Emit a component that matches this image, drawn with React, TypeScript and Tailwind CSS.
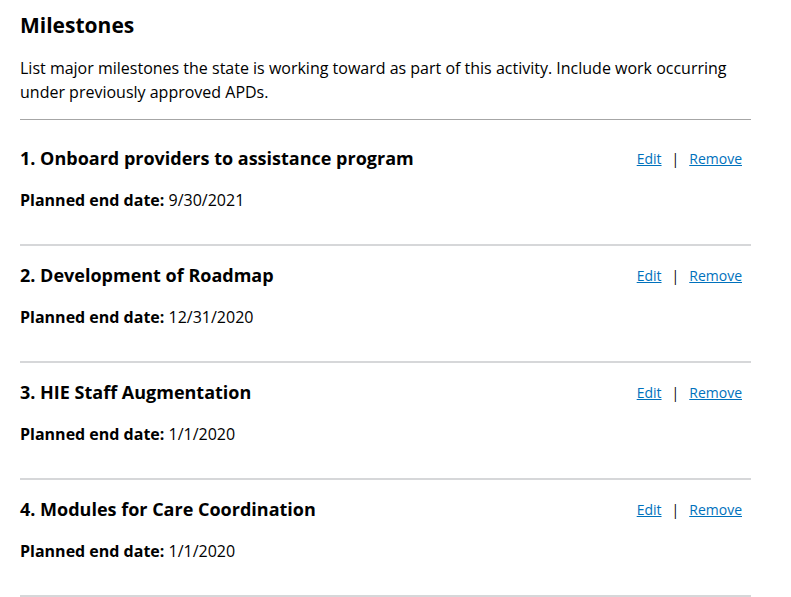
import React from "react";

const items = [
  { title: "1. Onboard providers to assistance program", date: "9/30/2021" },
  { title: "2. Development of Roadmap", date: "12/31/2020" },
  { title: "3. HIE Staff Augmentation", date: "1/1/2020" },
  { title: "4. Modules for Care Coordination", date: "1/1/2020" },
];

export default function App() {
  return (
    <div className="min-h-screen bg-white text-black" style={{ fontFamily: '"Open Sans", sans-serif' }}>
      <div className="w-[751px] pl-[20px] pt-[12px]">
        <h2 className="text-[21px] font-bold leading-[27px]">Milestones</h2>
        <p className="mt-[17px] text-[16px] leading-[24px]">
          List major milestones the state is working toward as part of this activity. Include work occurring
          under previously approved APDs.
        </p>
        <hr className="mt-[15px] border-0 h-px bg-[#a6a6a6]" />
        <div className="pt-[9px]">
          {items.map((it) => (
            <div key={it.title} className="border-b-2 border-[#d6d7d9] pt-[18px] pb-[32px]">
              <div className="flex items-center justify-between">
                <h3 className="text-[18px] font-bold leading-[23px]">{it.title}</h3>
                <div className="flex items-center pr-[9px] text-[14px] leading-[20px]">
                  <a href="#" className="text-[#0071bc] underline">Edit</a>
                  <span className="mx-[10px] text-black">|</span>
                  <a href="#" className="text-[#0071bc] underline">Remove</a>
                </div>
              </div>
              <p className="mt-[18px] text-[16px] leading-[24px]">
                <strong className="font-bold">Planned end date:</strong> {it.date}
              </p>
            </div>
          ))}
        </div>
      </div>
    </div>
  );
}
